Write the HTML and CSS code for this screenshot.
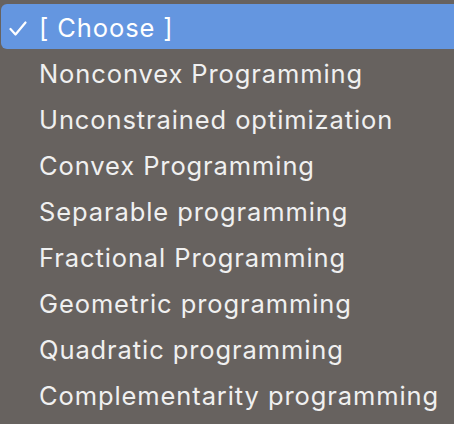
FILE: index.html
```html
<!DOCTYPE html>
<html>
<head>
<meta charset="utf-8">
<link rel="stylesheet" href="styles.css">
</head>
<body>
<ul class="menu">
  <li class="item selected"><span class="check"><svg width="18" height="15" viewBox="0 0 18 15"><path d="M1.5 8 L6.5 13.5 L16.5 1.5" fill="none" stroke="#fff" stroke-width="2.2" stroke-linecap="round" stroke-linejoin="round"/></svg></span><span class="label">[ Choose ]</span></li>
  <li class="item"><span class="check"></span><span class="label">Nonconvex Programming</span></li>
  <li class="item"><span class="check"></span><span class="label">Unconstrained optimization</span></li>
  <li class="item"><span class="check"></span><span class="label">Convex Programming</span></li>
  <li class="item"><span class="check"></span><span class="label">Separable programming</span></li>
  <li class="item"><span class="check"></span><span class="label">Fractional Programming</span></li>
  <li class="item"><span class="check"></span><span class="label">Geometric programming</span></li>
  <li class="item"><span class="check"></span><span class="label">Quadratic programming</span></li>
  <li class="item"><span class="check"></span><span class="label">Complementarity programming</span></li>
</ul>
</body>
</html>
```
FILE: styles.css
```css
html, body {
  margin: 0;
  padding: 0;
  background: #67625f;
  width: 454px;
  height: 424px;
  overflow: hidden;
}
.menu {
  list-style: none;
  margin: 0;
  padding: 4px 0 0 1px;
  font-family: Inter, "Noto Sans", sans-serif;
  font-size: 25.5px;
  letter-spacing: 0.9px;
  color: #f0f0f0;
}
.item {
  display: flex;
  align-items: center;
  height: 46px;
  white-space: nowrap;
}
.item.selected {
  height: 45px;
  margin-bottom: 1px;
  background: #6496e0;
  border-radius: 6px 0 0 6px;
  margin-right: -20px;
  color: #ffffff;
}
.check {
  width: 38px;
  flex: none;
  display: flex;
  align-items: center;
  padding-left: 8px;
  padding-top: 3px;
  box-sizing: border-box;
}
.check svg { display: block; }
.label { line-height: 1; padding-top: 2px; }
```
